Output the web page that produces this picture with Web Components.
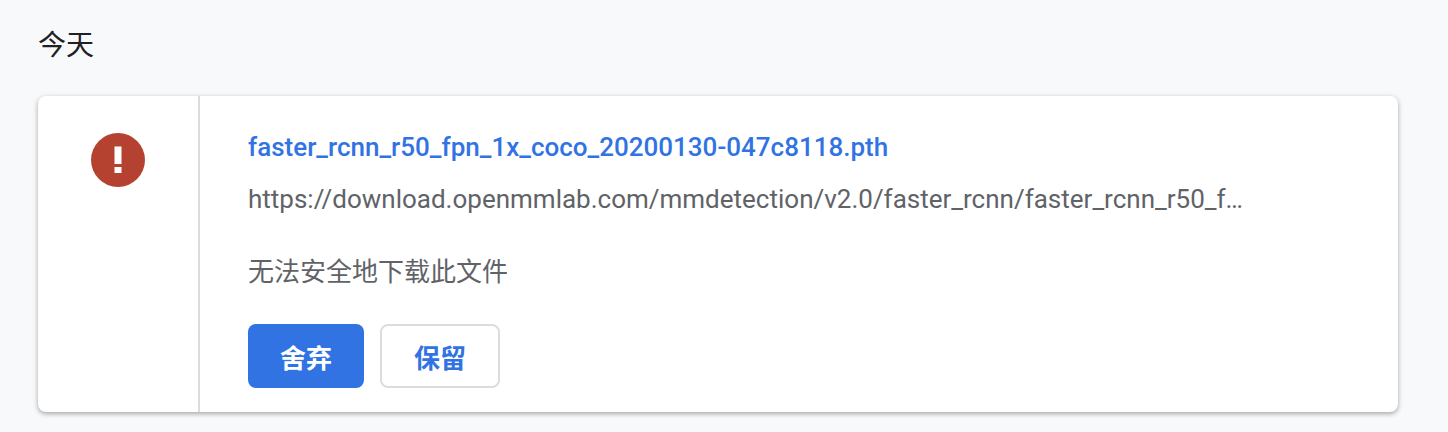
<!DOCTYPE html>
<html lang="zh-CN"><head><meta charset="utf-8"><title>下载内容</title>
<style>
html,body{margin:0;padding:0;height:432px;overflow:hidden;background:#f8f9fa}
body{font-family:Roboto,"Noto Sans CJK SC",sans-serif}
</style></head><body>
<download-page>
  <span slot="heading">今天</span>
  <download-item name="faster_rcnn_r50_fpn_1x_coco_20200130-047c8118.pth" url="https://download.openmmlab.com/mmdetection/v2.0/faster_rcnn/faster_rcnn_r50_f…" status="无法安全地下载此文件"></download-item>
</download-page>
<script>
customElements.define('download-page',class extends HTMLElement{
  constructor(){super();this.attachShadow({mode:'open'}).innerHTML=`<style>
    :host{display:block;padding:26px 50px 20px 38px;color:#202124}
    .h{font-size:28px;line-height:40px;height:40px;margin-bottom:30px}
  </style><div class="h"><slot name="heading"></slot></div><slot></slot>`;}
});
customElements.define('dl-button',class extends HTMLElement{
  constructor(){super();this.attachShadow({mode:'open'}).innerHTML=`<style>
    :host{display:flex;align-items:center;justify-content:center;box-sizing:border-box;height:64px;border-radius:8px;font-size:26px;font-weight:700;padding:0 32px;border:2px solid #dadce0;color:#3173e3;background:#fff}
    :host([primary]){background:#3173e3;border:0;color:#fff}
  </style><slot></slot>`;}
});
customElements.define('download-item',class extends HTMLElement{
  constructor(){super();const a=n=>this.getAttribute(n);this.attachShadow({mode:'open'}).innerHTML=`<style>
    :host{display:flex;height:316px;background:#fff;border-radius:8px;box-shadow:0 2px 4px rgba(60,64,67,.35),0 1px 6px rgba(60,64,67,.12)}
    .ic{flex:none;display:flex;justify-content:center;padding-top:37px;box-sizing:border-box;border-right:2px solid #dadce0;width:162px}
    svg{width:54px;height:54px;display:block}
    .m{flex:1;min-width:0;padding:32px 0 0 48px}
    .n{font-size:26px;line-height:38px;font-weight:500;color:#3173e3}
    .u{font-size:26px;line-height:38px;margin-top:14px;color:#5f6368;white-space:nowrap}
    .s{font-size:26px;line-height:38px;margin-top:35px;color:#5f6368}
    .b{display:flex;gap:16px;margin-top:33px}
  </style><div class="ic"><svg viewBox="0 0 54 54"><circle cx="27" cy="27" r="27" fill="#b54230"/><rect x="23.500" y="13.500" width="7" height="17.500" fill="#fff"/><rect x="23.500" y="34" width="7" height="6" fill="#fff"/></svg></div>
  <div class="m"><div class="n">${a('name')}</div><div class="u">${a('url')}</div><div class="s">${a('status')}</div>
  <div class="b"><dl-button primary>舍弃</dl-button><dl-button>保留</dl-button></div></div>`;}
});
</script></body></html>
